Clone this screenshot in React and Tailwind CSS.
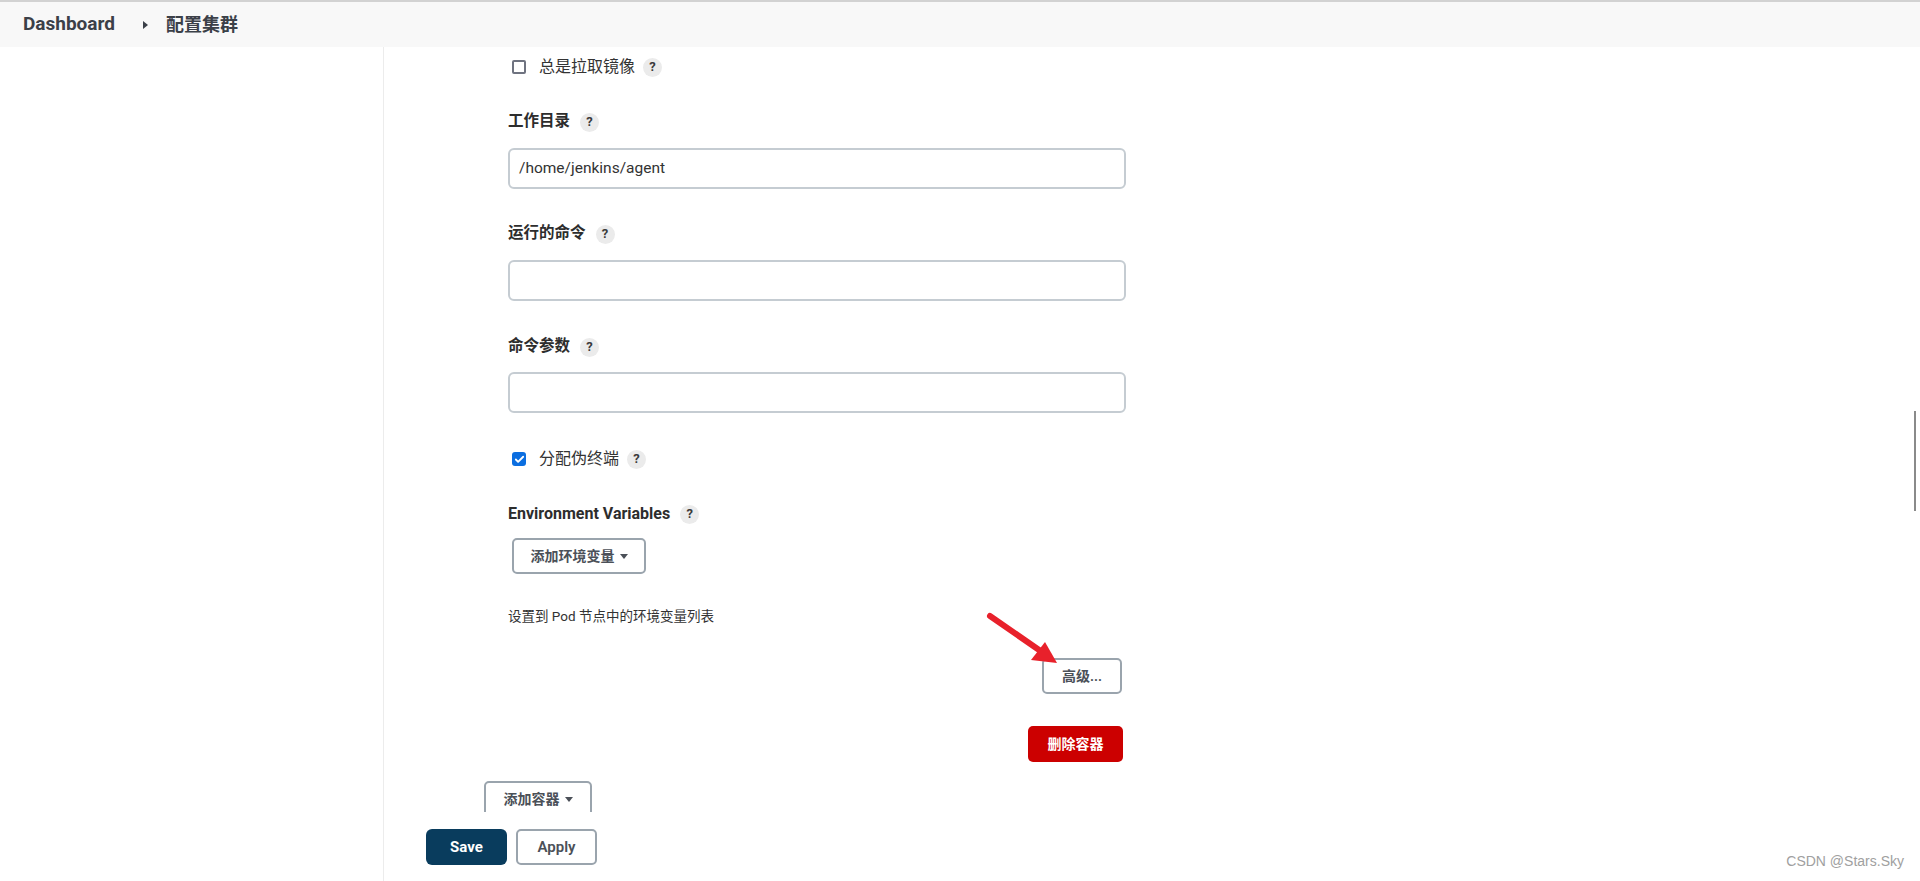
import { Check } from "lucide-react";

const font = "font-['Roboto','Noto_Sans_CJK_SC',sans-serif]";

const Help = () => (
  <span className="inline-flex h-[19px] w-[19px] items-center justify-center rounded-full bg-[#ebebeb] text-[13px] font-bold text-[#3a3a3a]">
    ?
  </span>
);

const Caret = () => (
  <svg width="8" height="5" viewBox="0 0 8 5" className="ml-[5px]">
    <path d="M0 0h8L4 5z" fill="#4b5058" />
  </svg>
);

const CheckRow = ({ label, checked, className = "" }) => (
  <div className={`flex h-[24px] items-center pl-[4px] ${className}`}>
    {checked ? (
      <span className="flex h-[14px] w-[14px] items-center justify-center rounded-[3px] bg-[#0b6ee0]">
        <Check size={11} strokeWidth={4} color="#fff" />
      </span>
    ) : (
      <span className="h-[14px] w-[14px] rounded-[2px] border-2 border-[#6f7380] bg-white" />
    )}
    <span className="ml-[13px] mr-[8px] text-[16px] text-[#333]">{label}</span>
    <Help />
  </div>
);

const Label = ({ text, className = "", size = "text-[15.5px]" }) => (
  <div className={`flex h-[24px] items-center gap-[10px] ${className}`}>
    <span className={`${size} font-bold text-[#2d2d2d]`}>{text}</span>
    <Help />
  </div>
);

const Field = ({ value = "", className = "" }) => (
  <div
    className={`flex h-[41px] w-[618px] items-center rounded-[6px] border-2 border-[#c5ccd2] bg-white px-[9px] text-[15.5px] text-[#333] ${className}`}
  >
    {value}
  </div>
);

const OutlineButton = ({ children, className = "" }) => (
  <div
    className={`flex items-center justify-center rounded-[5px] border-2 border-[#9aa4ad] bg-white text-[14px] font-semibold text-[#4b5058] ${className}`}
  >
    {children}
  </div>
);

export default function App() {
  return (
    <div className={`flex h-[881px] w-[1920px] flex-col overflow-hidden bg-white ${font}`}>
      {/* Breadcrumb bar */}
      <div className="flex h-[47px] shrink-0 items-center border-t-2 border-[#d2d2d2] bg-[#f8f8f8] pl-[23px]">
        <span className="text-[19px] font-bold text-[#3b4048]">Dashboard</span>
        <svg width="5" height="8" viewBox="0 0 5 8" className="ml-[28px] mr-[18px]">
          <path d="M0 0l5 4-5 4z" fill="#3b4048" />
        </svg>
        <span className="text-[18px] font-bold text-[#3b4048]">配置集群</span>
      </div>

      <div className="flex min-h-0 flex-1">
        {/* Side panel */}
        <div className="w-[384px] shrink-0 border-r border-[#ececec]" />

        {/* Main panel */}
        <div className="relative flex min-w-0 flex-1 flex-col">
          <div className="min-h-0 flex-1 overflow-hidden">
            <div className="ml-[124px] flex w-[618px] flex-col">
              <CheckRow label="总是拉取镜像" className="mt-[8px]" />

              <Label text="工作目录" className="mt-[31px]" />
              <Field value="/home/jenkins/agent" className="mt-[14px]" />

              <Label text="运行的命令" className="mt-[33px]" />
              <Field className="mt-[14px]" />

              <Label text="命令参数" className="mt-[34px]" />
              <Field className="mt-[13px]" />

              <CheckRow label="分配伪终端" checked className="mt-[34px]" />

              <Label text="Environment Variables" size="text-[16px]" className="mt-[31px]" />
              <div className="mt-[12px] pl-[4px]">
                <OutlineButton className="h-[36px] w-[134px]">
                  添加环境变量
                  <Caret />
                </OutlineButton>
              </div>

              <div className="mt-[32px] flex h-[20px] items-center text-[13.5px] text-[#333]">
                设置到 Pod 节点中的环境变量列表
              </div>

              <div className="mt-[32px] flex justify-end pr-[4px]">
                <OutlineButton className="h-[36px] w-[80px]">高级...</OutlineButton>
              </div>

              <div className="mt-[32px] flex justify-end pr-[3px]">
                <div className="flex h-[36px] w-[95px] items-center justify-center rounded-[5px] bg-[#cc0000] text-[14px] font-bold text-white">
                  删除容器
                </div>
              </div>
            </div>

            <div className="ml-[100px] mt-[19px]">
              <OutlineButton className="h-[36px] w-[108px]">
                添加容器
                <Caret />
              </OutlineButton>
            </div>
          </div>

          {/* Bottom app bar */}
          <div className="flex h-[69px] shrink-0 items-start gap-[9px] bg-white pl-[42px] pt-[17px]">
            <div className="flex h-[36px] w-[81px] items-center justify-center rounded-[6px] bg-[#093c5d] text-[15px] font-bold text-white">
              Save
            </div>
            <OutlineButton className="h-[36px] w-[81px] text-[15px] font-bold">Apply</OutlineButton>
          </div>

          {/* Scrollbar thumb */}
          <div className="absolute right-[4px] top-[364px] h-[100px] w-[2px] bg-[#8a8a8a]" />

          {/* Annotation arrow */}
          <svg
            className="pointer-events-none absolute left-0 top-0"
            width="1536"
            height="834"
            viewBox="384 47 1536 834"
          >
            <line x1="990" y1="616" x2="1042" y2="652" stroke="#e8212b" strokeWidth="6" strokeLinecap="round" />
            <path d="M1057 663 L1031 660 L1045 642 Z" fill="#e8212b" />
          </svg>

          <div className="absolute bottom-[9px] right-[16px] text-[14px] text-[#a0a0a0] font-['Liberation_Sans',sans-serif]">
            CSDN @Stars.Sky
          </div>
        </div>
      </div>
    </div>
  );
}
